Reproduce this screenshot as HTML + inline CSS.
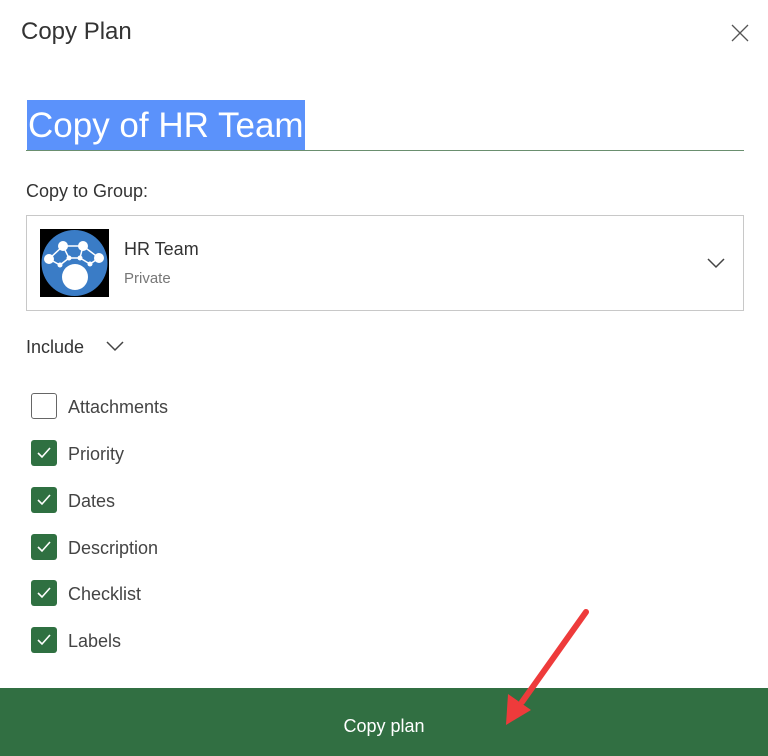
<!DOCTYPE html>
<html><head><meta charset="utf-8"><style>
body{margin:0;width:768px;height:756px;background:#fff;font-family:"Liberation Sans",sans-serif;color:#323130;position:relative;overflow:hidden}
.a{position:absolute;white-space:nowrap}
.cb{position:absolute;left:31px;width:26px;height:26px;border-radius:3px;box-sizing:border-box}
.on{background:#2f7041}
.off{border:1.5px solid #666;background:#fff}
.lbl{position:absolute;left:68px;font-size:18px;color:#444}
</style></head><body>
<div class="a" style="left:21px;top:18px;font-size:24px;color:#333">Copy Plan</div>
<svg class="a" style="left:731px;top:24px" width="18" height="18"><path d="M1 1L17 17M17 1L1 17" stroke="#555" stroke-width="1.3"/></svg>
<div class="a" style="left:27px;top:100px;width:278px;height:50px;background:#5b92fb"></div>
<div class="a" style="left:28px;top:106px;font-size:35px;color:#fff">Copy of HR Team</div>
<div class="a" style="left:26px;top:150px;width:718px;height:1px;background:#6a8f6f"></div>
<div class="a" style="left:26px;top:181px;font-size:18px;color:#333">Copy to Group:</div>
<div class="a" style="left:26px;top:215px;width:716px;height:94px;border:1px solid #c8c8c8"></div>
<svg class="a" style="left:40px;top:229px" width="69" height="68">
<rect width="69" height="68" fill="#000"/>
<circle cx="34.5" cy="34" r="33" fill="#3a7cc6"/>
<path d="M9 30L23 17L43 17L59 29M9 30L20 36L29 29L40 29L50 35L59 29M23 17L29 29M43 17L40 29M20 36L29 29M40 29L50 35" stroke="#fff" stroke-width="1.5" fill="none"/>
<circle cx="9" cy="30" r="5" fill="#fff"/><circle cx="23" cy="17" r="5" fill="#fff"/><circle cx="43" cy="17" r="5" fill="#fff"/><circle cx="59" cy="29" r="5" fill="#fff"/>
<circle cx="20" cy="36" r="2.5" fill="#fff"/><circle cx="29" cy="29" r="2.5" fill="#fff"/><circle cx="40" cy="29" r="2.5" fill="#fff"/><circle cx="50" cy="35" r="2.5" fill="#fff"/>
<circle cx="35" cy="48" r="13" fill="#fff"/>
</svg>
<div class="a" style="left:124px;top:239px;font-size:18px;color:#333">HR Team</div>
<div class="a" style="left:124px;top:270px;font-size:15px;color:#777">Private</div>
<svg class="a" style="left:707px;top:257px" width="18" height="12"><path d="M1 2L9 10L17 2" stroke="#444" stroke-width="1.5" fill="none"/></svg>
<div class="a" style="left:26px;top:337px;font-size:18px;color:#333">Include</div>
<svg class="a" style="left:106px;top:340px" width="18" height="12"><path d="M1 2L9 10L17 2" stroke="#444" stroke-width="1.5" fill="none"/></svg>
<div class="cb off" style="top:393px"></div><div class="lbl" style="top:397px">Attachments</div>
<div class="cb on" style="top:440px"></div><div class="lbl" style="top:444px">Priority</div>
<div class="cb on" style="top:487px"></div><div class="lbl" style="top:491px">Dates</div>
<div class="cb on" style="top:534px"></div><div class="lbl" style="top:538px">Description</div>
<div class="cb on" style="top:580px"></div><div class="lbl" style="top:584px">Checklist</div>
<div class="cb on" style="top:627px"></div><div class="lbl" style="top:631px">Labels</div>
<svg class="a" style="left:31px;top:393px" width="26" height="260">
<g stroke="#fff" stroke-width="1.6" fill="none">
<path d="M7 60L11 64L19 55"/><path d="M7 107L11 111L19 102"/><path d="M7 154L11 158L19 149"/><path d="M7 200L11 204L19 195"/><path d="M7 247L11 251L19 242"/></g></svg>
<div class="a" style="left:0;top:688px;width:768px;height:68px;background:#316f42"></div>
<div class="a" style="left:0;top:716px;width:768px;text-align:center;font-size:18px;color:#fff">Copy plan</div>
<svg class="a" style="left:0;top:0" width="768" height="756">
<line x1="586" y1="612" x2="522" y2="702" stroke="#ee3b3b" stroke-width="6" stroke-linecap="round"/>
<polygon points="506,725 508,694 531,710" fill="#ee3b3b"/>
</svg>
</body></html>
